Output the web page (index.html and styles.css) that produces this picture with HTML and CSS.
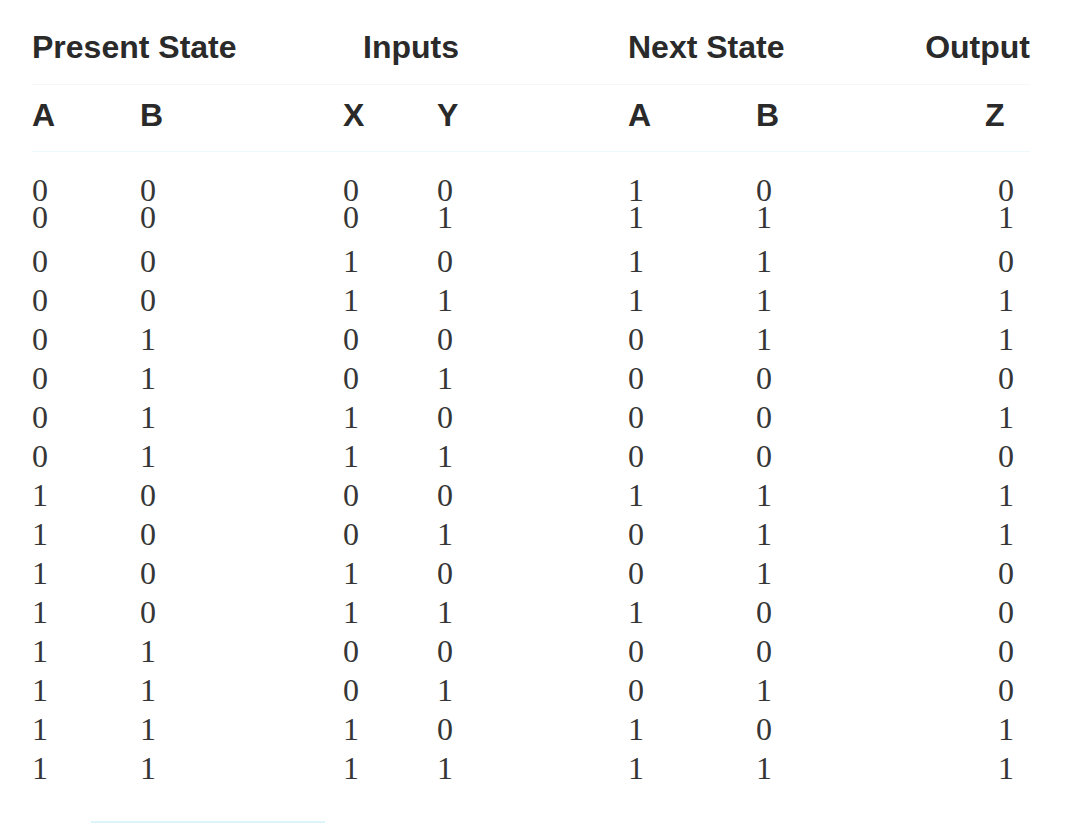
FILE: index.html
```html
<!DOCTYPE html>
<html lang="en">
<head>
<meta charset="utf-8">
<title>State Table</title>
<link rel="stylesheet" href="styles.css">
</head>
<body>
<div class="sheet">
  <div class="row head-groups">
    <div class="group present">Present State</div>
    <div class="group inputs">Inputs</div>
    <div class="group next">Next State</div>
    <div class="group output">Output</div>
  </div>
  <div class="row head-vars">
    <div class="var">A</div>
    <div class="var">B</div>
    <div class="var">X</div>
    <div class="var">Y</div>
    <div class="var">A</div>
    <div class="var">B</div>
    <div class="var">Z</div>
  </div>
  <div class="body">
    <div class="row data first"><span>0</span><span>0</span><span>0</span><span>0</span><span>1</span><span>0</span><span class="z">0</span></div>
    <div class="row data tight"><span>0</span><span>0</span><span>0</span><span>1</span><span>1</span><span>1</span><span class="z">1</span></div>
    <div class="row data loose"><span>0</span><span>0</span><span>1</span><span>0</span><span>1</span><span>1</span><span class="z">0</span></div>
    <div class="row data"><span>0</span><span>0</span><span>1</span><span>1</span><span>1</span><span>1</span><span class="z">1</span></div>
    <div class="row data"><span>0</span><span>1</span><span>0</span><span>0</span><span>0</span><span>1</span><span class="z">1</span></div>
    <div class="row data"><span>0</span><span>1</span><span>0</span><span>1</span><span>0</span><span>0</span><span class="z">0</span></div>
    <div class="row data"><span>0</span><span>1</span><span>1</span><span>0</span><span>0</span><span>0</span><span class="z">1</span></div>
    <div class="row data"><span>0</span><span>1</span><span>1</span><span>1</span><span>0</span><span>0</span><span class="z">0</span></div>
    <div class="row data"><span>1</span><span>0</span><span>0</span><span>0</span><span>1</span><span>1</span><span class="z">1</span></div>
    <div class="row data"><span>1</span><span>0</span><span>0</span><span>1</span><span>0</span><span>1</span><span class="z">1</span></div>
    <div class="row data"><span>1</span><span>0</span><span>1</span><span>0</span><span>0</span><span>1</span><span class="z">0</span></div>
    <div class="row data"><span>1</span><span>0</span><span>1</span><span>1</span><span>1</span><span>0</span><span class="z">0</span></div>
    <div class="row data"><span>1</span><span>1</span><span>0</span><span>0</span><span>0</span><span>0</span><span class="z">0</span></div>
    <div class="row data"><span>1</span><span>1</span><span>0</span><span>1</span><span>0</span><span>1</span><span class="z">0</span></div>
    <div class="row data"><span>1</span><span>1</span><span>1</span><span>0</span><span>1</span><span>0</span><span class="z">1</span></div>
    <div class="row data"><span>1</span><span>1</span><span>1</span><span>1</span><span>1</span><span>1</span><span class="z">1</span></div>
  </div>
  <div class="footline"></div>
</div>
</body>
</html>
```
FILE: styles.css
```css
html, body {
  margin: 0;
  padding: 0;
  background: #ffffff;
}

body {
  width: 1068px;
  height: 826px;
  overflow: hidden;
}

.sheet {
  padding: 31px 0 0 32px;
  display: flex;
  flex-direction: column;
}

.row {
  display: grid;
  grid-template-columns: 108px 203px 94px 191px 128px 229px 45px;
  width: 998px;
}

.head-groups,
.head-vars {
  font-family: "Liberation Sans", Arial, sans-serif;
  font-weight: bold;
  font-size: 32px;
  line-height: 32px;
  color: #2a2a2a;
  white-space: nowrap;
}

.head-groups {
  padding-bottom: 21px;
  border-bottom: 1px solid #f6f8f8;
}

.present {
  grid-column: 1 / span 2;
}

.inputs {
  grid-column: 3 / span 2;
  padding-left: 20px;
}

.next {
  grid-column: 5 / span 1;
}

.output {
  grid-column: 6 / span 2;
  justify-self: end;
}

.head-vars {
  margin-top: 14px;
  padding-bottom: 20px;
  border-bottom: 1px solid #ecf8f9;
}

.body {
  display: flex;
  flex-direction: column;
  margin-top: 19px;
}

.data {
  font-family: "Liberation Serif", "Times New Roman", serif;
  font-size: 32px;
  line-height: 39px;
  color: #363636;
}

.data.tight {
  margin-top: -12px;
}

.data.loose {
  margin-top: 5px;
}

.data .z {
  padding-left: 13px;
}

.footline {
  margin: 33px 0 0 59px;
  width: 234px;
  height: 2px;
  background: #dcf5fb;
}
```
